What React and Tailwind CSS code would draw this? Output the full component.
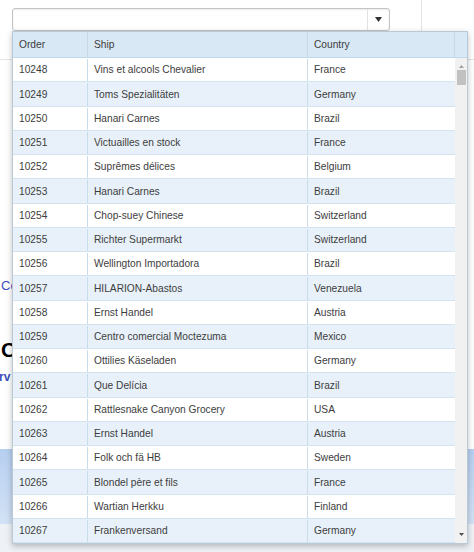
import React from "react";

const rows = [
  ["10248", "Vins et alcools Chevalier", "France"],
  ["10249", "Toms Spezialitäten", "Germany"],
  ["10250", "Hanari Carnes", "Brazil"],
  ["10251", "Victuailles en stock", "France"],
  ["10252", "Suprêmes délices", "Belgium"],
  ["10253", "Hanari Carnes", "Brazil"],
  ["10254", "Chop-suey Chinese", "Switzerland"],
  ["10255", "Richter Supermarkt", "Switzerland"],
  ["10256", "Wellington Importadora", "Brazil"],
  ["10257", "HILARION-Abastos", "Venezuela"],
  ["10258", "Ernst Handel", "Austria"],
  ["10259", "Centro comercial Moctezuma", "Mexico"],
  ["10260", "Ottilies Käseladen", "Germany"],
  ["10261", "Que Delícia", "Brazil"],
  ["10262", "Rattlesnake Canyon Grocery", "USA"],
  ["10263", "Ernst Handel", "Austria"],
  ["10264", "Folk och fä HB", "Sweden"],
  ["10265", "Blondel père et fils", "France"],
  ["10266", "Wartian Herkku", "Finland"],
  ["10267", "Frankenversand", "Germany"],
];

export default function App() {
  return (
    <div className="relative w-[474px] h-[552px] overflow-hidden bg-white font-['Liberation_Sans',Arial,sans-serif] text-[#3d3d3d]">
      {/* page behind */}
      <div className="flex flex-col h-full">
        <div className="flex h-[31px]">
          <div className="w-[421px]" />
          <div className="w-px bg-[#e3e3e3]" />
        </div>
        <div className="h-[29px] border-b border-[#e6e6e6]" />
        <div className="h-[218px]" />
        <div className="text-[13px] leading-[16px] text-[#3b4cc0] pl-[1px]">Co</div>
        <div className="h-[44px]" />
        <div className="text-[21px] leading-[24px] font-bold text-black pl-[1px]">C</div>
        <div className="h-[8px]" />
        <div className="text-[12px] leading-[14px] font-bold text-[#3b4cc0] -ml-[1px]">rv</div>
        <div className="h-[65px]" />
        <div className="h-[75px] bg-gradient-to-b from-[#b6cff0] to-[#d3e2f5]" />
        <div className="flex-1 bg-[#eef1f5]" />
      </div>

      {/* combobox */}
      <div className="absolute left-[12px] top-[8px] w-[378px] h-[23px] rounded-[3px] border border-[#c4c4c4] bg-white shadow-[inset_0_1px_2px_rgba(0,0,0,0.08)] flex">
        <div className="flex-1" />
        <div className="w-[22px] flex items-center justify-center rounded-r-[3px] border-l border-[#e2e2e2]">
          <svg width="7" height="5" viewBox="0 0 7 5"><path d="M0 0h7L3.5 5z" fill="#333" /></svg>
        </div>
      </div>

      {/* dropdown */}
      <div className="absolute left-[12px] top-[31px] w-[456px] border border-[#b9cad6] bg-white shadow-[0_2px_6px_rgba(0,0,0,0.25)] text-[10.2px]">
        <div className="grid grid-cols-[75px_220px_147px_12px] h-[26px] bg-[#d8e8f4] border-b border-[#c3d8e8]">
          <div className="flex items-center pl-[6px] border-r border-[#c3d8e8]">Order</div>
          <div className="flex items-center pl-[6px] border-r border-[#c3d8e8]">Ship</div>
          <div className="flex items-center pl-[6px] border-r border-[#c3d8e8]">Country</div>
          <div />
        </div>
        <div className="flex">
          <div className="flex-1">
            {rows.map((r, i) => (
              <div
                key={r[0]}
                className={`grid grid-cols-[75px_220px_147px] h-[24.25px] pt-px border-b border-[#d3e3ef] ${i % 2 ? "bg-[#e8f1f9]" : "bg-white"}`}
              >
                <div className="flex items-center pl-[6px] border-r border-[#c9dcea]">{r[0]}</div>
                <div className="flex items-center pl-[6px] border-r border-[#c9dcea]">{r[1]}</div>
                <div className="flex items-center pl-[6px]">{r[2]}</div>
              </div>
            ))}
          </div>
          <div className="w-[12px] bg-[#f1f1f1] flex flex-col items-center">
            <div className="h-[10px] flex items-end justify-center">
              <svg width="5" height="3" viewBox="0 0 5 3"><path d="M0 3h5L2.5 0z" fill="#a3a3a3" /></svg>
            </div>
            <div className="mt-[2px] w-[9px] h-[15px] bg-[#c1c1c1]" />
            <div className="flex-1" />
            <div className="h-[10px] flex items-start justify-center">
              <svg width="5" height="3" viewBox="0 0 5 3"><path d="M0 0h5L2.5 3z" fill="#505050" /></svg>
            </div>
          </div>
        </div>
      </div>
    </div>
  );
}
